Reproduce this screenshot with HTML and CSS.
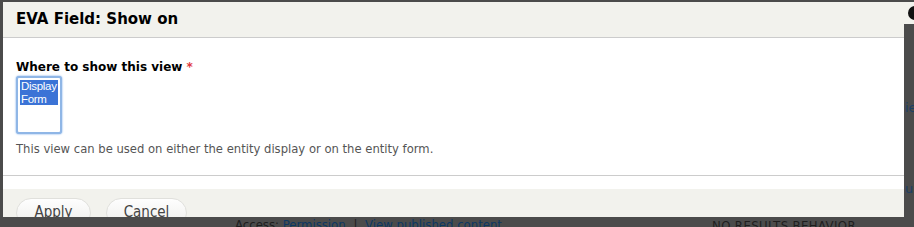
FILE: index.html
```html
<!DOCTYPE html>
<html>
<head>
<meta charset="utf-8">
<link rel="stylesheet" href="styles.css">
</head>
<body>
<div class="page">
  <div class="top-row">
    <div class="dialog">
      <div class="dialog-title">EVA Field: Show on</div>
      <div class="dialog-body">
        <div class="form-item">
          <label class="form-label">Where to show this view <span class="req">*</span></label>
          <div class="select">
            <div class="option selected">Display</div>
            <div class="option selected">Form</div>
          </div>
          <div class="description">This view can be used on either the entity display or on the entity form.</div>
        </div>
      </div>
      <div class="body-spacer"></div>
      <div class="button-pane">
        <button class="btn">Apply</button>
        <button class="btn">Cancel</button>
      </div>
    </div>
    <div class="side-strip">
      <div class="side-title"><span class="close-btn"></span></div>
      <div class="side-text first">ie</div>
      <div class="side-text second">u</div>
    </div>
  </div>
  <div class="under-row">
    <div class="access">Access: <span class="link">Permission</span> <span class="sep">|</span> <span class="link">View published content</span></div>
    <div class="noresults">NO RESULTS BEHAVIOR</div>
  </div>
</div>
</body>
</html>
```

FILE: styles.css
```css
html, body {
  margin: 0;
  padding: 0;
  background: #4b4b4b;
  overflow: hidden;
}
body {
  width: 914px;
  height: 227px;
  font-family: "DejaVu Sans", "Liberation Sans", sans-serif;
}
.page {
  padding-top: 2px;
}
.top-row {
  display: flex;
  align-items: flex-start;
}
.dialog {
  margin-left: 3px;
  width: 901px;
  height: 215px;
  background: #fff;
  display: flex;
  flex-direction: column;
  overflow: hidden;
}
.dialog-title {
  flex-shrink: 0;
  height: 35px;
  background: #f2f2ed;
  border-bottom: 1px solid #cccccc;
  box-sizing: content-box;
  padding-left: 13px;
  font-size: 15px;
  font-weight: bold;
  color: #000;
  line-height: 35px;
}
.dialog-body {
  flex-shrink: 0;
  height: 138px;
  border-bottom: 1px solid #cccccc;
  padding: 0 13px;
  box-sizing: border-box;
}
.form-item {
  padding-top: 21px;
}
.form-label {
  display: block;
  font-size: 12px;
  font-weight: bold;
  color: #000;
  line-height: 16px;
}
.req {
  color: #e0393e;
}
.select {
  margin-top: 1px;
  width: 38px;
  height: 50px;
  border: 2px solid #8fb6e6;
  border-radius: 3px;
  box-shadow: 0 0 2px #5c9ae6;
  background: #fff;
  padding: 2px;
  box-sizing: content-box;
}
.option {
  font-family: "Liberation Sans", Arial, sans-serif;
  font-size: 11.5px;
  line-height: 12.5px;
  color: #fff;
  background: #3b73d6;
  padding-left: 1px;
  letter-spacing: -0.3px;
  white-space: nowrap;
  overflow: hidden;
}
.description {
  margin-top: 7px;
  font-size: 11.6px;
  color: #555;
  line-height: 16px;
}
.body-spacer {
  flex-shrink: 0;
  height: 13px;
  background: #fff;
}
.button-pane {
  flex: 1;
  min-height: 0;
  overflow: hidden;
  background: #f2f2ed;
  padding: 9px 13px 0;
  display: flex;
  gap: 15px;
  align-items: flex-start;
}
.btn {
  flex-shrink: 0;
  width: 75px;
  height: 30px;
  border: 1px solid #e0e0dc;
  border-radius: 16px;
  background: linear-gradient(#fefefe, #ededea);
  color: #444;
  font-family: "DejaVu Sans Condensed", "DejaVu Sans", sans-serif;
  font-size: 15px;
  padding: 0;
  padding-bottom: 2px;
}
.btn + .btn {
  width: 81px;
}
.side-strip {
  flex: 1;
  position: relative;
  height: 215px;
}
.side-title {
  height: 22px;
  background: #f2f2ed;
  position: relative;
  overflow: hidden;
}
.close-btn {
  position: absolute;
  left: 4px;
  top: 4px;
  width: 14px;
  height: 14px;
  border-radius: 50%;
  background: #111;
}
.side-text {
  position: absolute;
  left: 1px;
  font-size: 13px;
  color: #1c3f66;
  line-height: 16px;
}
.side-text.first { top: 98px; }
.side-text.second { top: 179px; }
.under-row {
  display: flex;
  height: 10px;
  overflow: visible;
  font-family: "DejaVu Sans Condensed", "DejaVu Sans", sans-serif;
  font-size: 13px;
  line-height: 16px;
}
.access {
  margin-left: 235px;
  margin-top: 0;
  color: #1e1e1e;
}
.access .link { color: #0d3763; }
.access .sep { margin: 0 4px; }
.noresults {
  margin-left: 0;
  position: absolute;
  left: 712px;
  top: 218px;
  color: #1e1e1e;
  letter-spacing: 0.4px;
}
```
